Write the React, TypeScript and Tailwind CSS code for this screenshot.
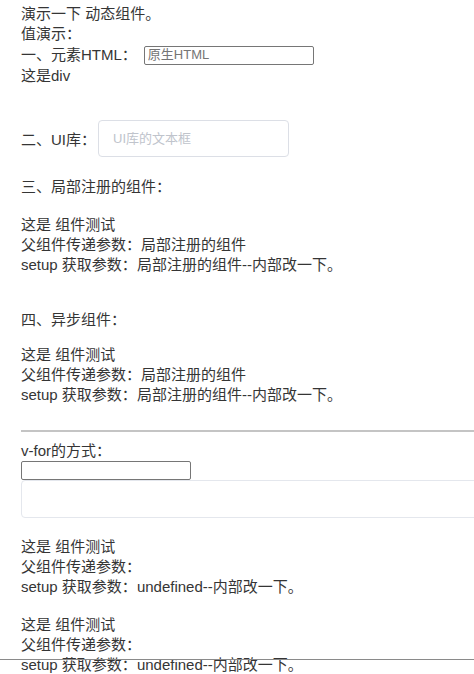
import React from "react";

const font = { fontFamily: '"Liberation Sans", "Noto Sans CJK SC", sans-serif' };

function TestComp({ parent, setup }: { parent: string; setup: string }) {
  return (
    <div>
      <div>这是 组件测试</div>
      <div>父组件传递参数：{parent}</div>
      <div>setup 获取参数：{setup}--内部改一下。</div>
    </div>
  );
}

export default function App() {
  return (
    <div
      className="relative w-[474px] h-[674px] overflow-hidden bg-white text-[15px] leading-[20px] text-[#353535]"
      style={font}
    >
      <div className="pl-[21px] pt-[4px]">
        <div>演示一下 动态组件。</div>
        <div>值演示：</div>
        <div className="flex items-center h-[22px]">
          <span>一、元素HTML：</span>
          <input
            className="ml-[7px] w-[170px] h-[19px] border border-[#767676] rounded-[2px] px-[3px] text-[13px] placeholder:text-[#757575] outline-none"
            placeholder="原生HTML"
            style={font}
          />
        </div>
        <div>这是div</div>

        <div className="mt-[34px] flex items-center h-[37px]">
          <span className="mt-[3px]">二、UI库：</span>
          <input
            className="ml-[2px] w-[191px] h-[37px] border border-[#dcdfe6] rounded-[4px] px-[14px] text-[13px] placeholder:text-[#c0c4cc] outline-none"
            placeholder="UI库的文本框"
            style={font}
          />
        </div>

        <div className="mt-[20px]">三、局部注册的组件：</div>

        <div className="mt-[18px]">
          <TestComp parent="局部注册的组件" setup="局部注册的组件" />
        </div>

        <div className="mt-[35px]">四、异步组件：</div>

        <div className="mt-[15px]">
          <TestComp parent="局部注册的组件" setup="局部注册的组件" />
        </div>

        <div className="mt-[25px] h-[2px] w-[480px] bg-[#c4c4c4]" />

        <div className="mt-[9px]">v-for的方式：</div>
        <input className="block w-[170px] h-[19px] border border-[#767676] rounded-[2px] outline-none" />
        <div className="w-[500px] h-[38px] border border-[#e4e7ed] rounded-[4px]" />

        <div className="mt-[19px]">
          <TestComp parent="" setup="undefined" />
        </div>
        <div className="mt-[18px]">
          <TestComp parent="" setup="undefined" />
        </div>
      </div>

      <div className="absolute left-0 top-[659px] w-[474px] h-px bg-[#8a8a8a]" />
    </div>
  );
}
